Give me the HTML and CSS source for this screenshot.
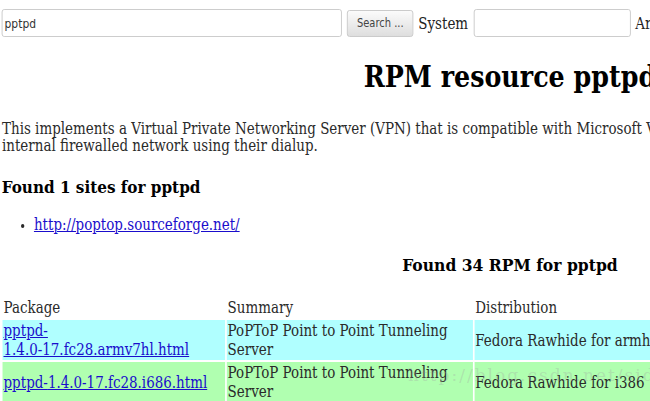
FILE: index.html
```html
<!DOCTYPE html>
<html>
<head>
<meta charset="utf-8">
<link rel="stylesheet" href="styles.css">
</head>
<body>
<div class="page">
  <form class="search">
    <input class="query" type="text" value="pptpd">
    <button class="btn" type="button">Search ...</button>
    <span class="label">System</span>
    <input class="sys" type="text" value="">
    <span class="label arch">Arch</span>
    <input class="sys" type="text" value="">
  </form>
  <h1 class="title"><span class="squeeze">RPM resource pptpd</span></h1>
  <p class="desc">This implements a Virtual Private Networking Server (VPN) that is compatible with Microsoft VPN clients. It allows windows users to connect to an internal firewalled network using their dialup.</p>
  <h3 class="sub"><span class="squeeze left">Found 1 sites for pptpd</span></h3>
  <ul class="sites">
    <li><a href="#">http://poptop.sourceforge.net/</a></li>
  </ul>
  <h3 class="sub center"><span class="squeeze">Found 34 RPM for pptpd</span></h3>
  <table class="rpms">
    <tr class="head"><td class="c1">Package</td><td class="c2">Summary</td><td class="c3">Distribution</td><td>Download</td></tr>
    <tr class="cyan"><td class="c1"><a href="#">pptpd-<span class="nb">1.4.0-17.fc28.armv7hl.html</span></a></td><td class="c2">PoPToP Point to Point Tunneling Server</td><td class="c3">Fedora Rawhide for armhfp</td><td><a href="#">pptpd-1.4.0-17.fc28.armv7hl.rpm</a></td></tr>
    <tr class="green"><td class="c1"><a href="#">pptpd-<span class="nb">1.4.0-17.fc28.i686.html</span></a></td><td class="c2">PoPToP Point to Point Tunneling Server</td><td class="c3">Fedora Rawhide for i386</td><td><a href="#">pptpd-1.4.0-17.fc28.i686.rpm</a></td></tr>
  </table>
</div>
<div class="watermark">http://blog.csdn.net/sid1386</div>
</body>
</html>
```
FILE: styles.css
```css
html, body {
  margin: 0;
  padding: 0;
  overflow: hidden;
  background: #fff;
}
body {
  font-family: "DejaVu Serif", serif;
  font-size: 16px;
  color: #2a2a2a;
}
/* the page is set in a condensed face: emulate it by narrowing the whole sheet */
.page {
  width: 1209px;
  padding: 0 2.4px;
  transform: scaleX(0.84);
  transform-origin: 0 0;
}
.search {
  display: flex;
  align-items: center;
  height: 28px;
  margin-top: 9px;
  white-space: nowrap;
}
.query, .sys {
  box-sizing: border-box;
  height: 28px;
  margin: 0;
  border: 1px solid #c9c9c9;
  border-radius: 3px;
  padding: 0 2px;
  font-family: "DejaVu Sans", sans-serif;
  font-size: 12.8px;
  color: #333;
  background: #fff;
}
.query { width: 405px; }
.sys { width: 187px; margin-left: 7.1px; }
.btn {
  box-sizing: border-box;
  height: 27px;
  width: 78.6px;
  margin: 0 0 0 6px;
  border: 1px solid #c6c6c6;
  border-radius: 3px;
  background: linear-gradient(#fbfbfb, #dedede);
  font-family: "DejaVu Sans", sans-serif;
  font-size: 11.8px;
  color: #444;
  padding: 0;
}
.label {
  margin-left: 6px;
  color: #222;
}
.arch { margin-left: 4.8px; }
.squeeze {
  display: inline-block;
  transform-origin: center;
  white-space: nowrap;
}
.squeeze.left {
  transform: scaleX(1.036);
  transform-origin: left;
}
.title {
  font-size: 30px;
  font-weight: bold;
  text-align: center;
  margin: 22px 0 0;
  color: #000;
}
.title .squeeze { transform: scaleX(1.006); }
.desc {
  margin: 26px 0 0;
  line-height: 17px;
}
.sub {
  font-size: 17.5px;
  font-weight: bold;
  margin: 23px 0 0;
  color: #000;
}
.sites {
  margin: 19px 0 0;
  padding-left: 38px;
  line-height: 17px;
}
.sites li { padding-left: 0; }
.sites li::marker { font-size: 14px; }
.sites a { color: #1a0dcc; }
.center {
  text-align: center;
  margin-top: 22px;
}
.center .squeeze { transform: scaleX(1.06); }
.rpms {
  border-spacing: 2.8px 2px;
  margin: 20px 0 0 -1.4px;
  color: #2a2a2a;
}
.rpms td {
  padding: 1px 1px 1px 1.2px;
  vertical-align: middle;
  line-height: 19px;
}
.rpms .c1 { width: 262.6px; }
.rpms .c2 { width: 290.6px; }
.rpms .c3 { width: 270px; }
.rpms a { color: #1a0dcc; }
.nb { white-space: nowrap; }
.cyan td { background: #b0ffff; }
.green td { background: #b0ffb0; }
.watermark {
  position: absolute;
  left: 408px;
  top: 365px;
  font-family: "DejaVu Serif", serif;
  font-size: 17px;
  letter-spacing: 2px;
  color: rgba(160, 160, 160, 0.3);
  pointer-events: none;
}
```
